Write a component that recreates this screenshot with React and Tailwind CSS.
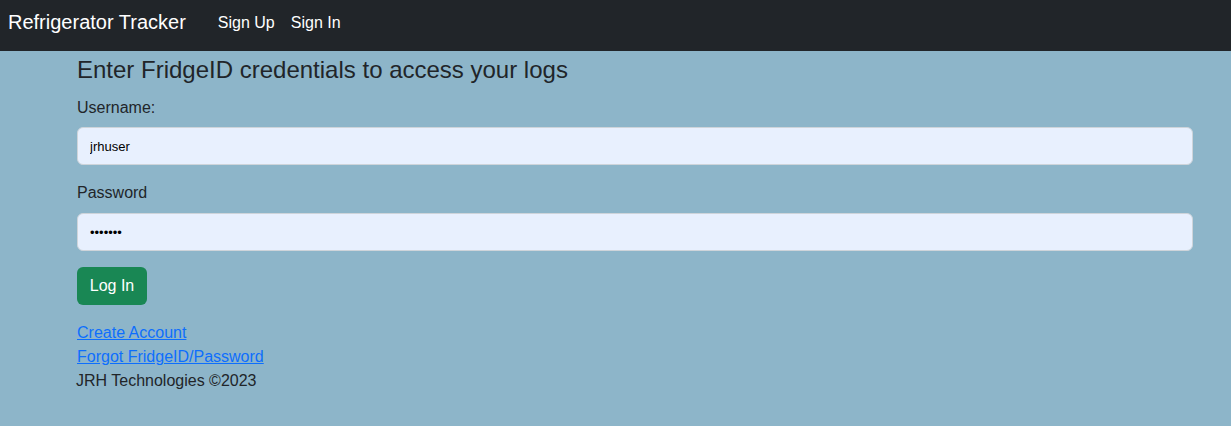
export default function App() {
  return (
    <div className="min-h-[426px] bg-[#8db5c9] font-['Liberation_Sans',Arial,sans-serif] text-[#212529]">
      <nav className="h-[51px] bg-[#212529] flex items-start pt-[7px] pl-2">
        <a className="text-[20px] leading-[30px] text-white mr-[24px]">Refrigerator Tracker</a>
        <div className="flex mt-[4px]">
          <a className="px-2 text-[16px] leading-6 text-white">Sign Up</a>
          <a className="px-2 text-[16px] leading-6 text-white">Sign In</a>
        </div>
      </nav>

      <main className="ml-[77px] w-[1116px] pt-[4px]">
        <h4 className="text-[24px] leading-[29px] mb-3">Enter FridgeID credentials to access your logs</h4>
        <form onSubmit={e => e.preventDefault()}>
          <div className="mb-4">
            <label className="block text-[16px] leading-6 mb-[7px]">Username:</label>
            <input
              className="block w-full h-[38px] px-3 rounded-[6px] border border-[#ced4da] bg-[#e8f0fe] text-[13px] text-black outline-none"
              defaultValue="jrhuser"
            />
          </div>
          <div className="mb-4">
            <label className="block text-[16px] leading-6 mb-[8px]">Password</label>
            <input
              type="password"
              className="block w-full h-[38px] px-3 rounded-[6px] border border-[#ced4da] bg-[#e8f0fe] text-[13px] text-black outline-none"
              defaultValue="jrhpass"
            />
          </div>
          <button className="h-[38px] w-[70px] rounded-[6px] bg-[#198754] text-white text-[16px]">Log In</button>
        </form>
        <div className="mt-4 text-[16px] leading-6">
          <a href="#" className="block w-fit text-[#0d6efd] underline">Create Account</a>
          <a href="#" className="block w-fit text-[#0d6efd] underline">Forgot FridgeID/Password</a>
          <p className="-ml-px">JRH Technologies ©2023</p>
        </div>
      </main>
    </div>
  );
}
